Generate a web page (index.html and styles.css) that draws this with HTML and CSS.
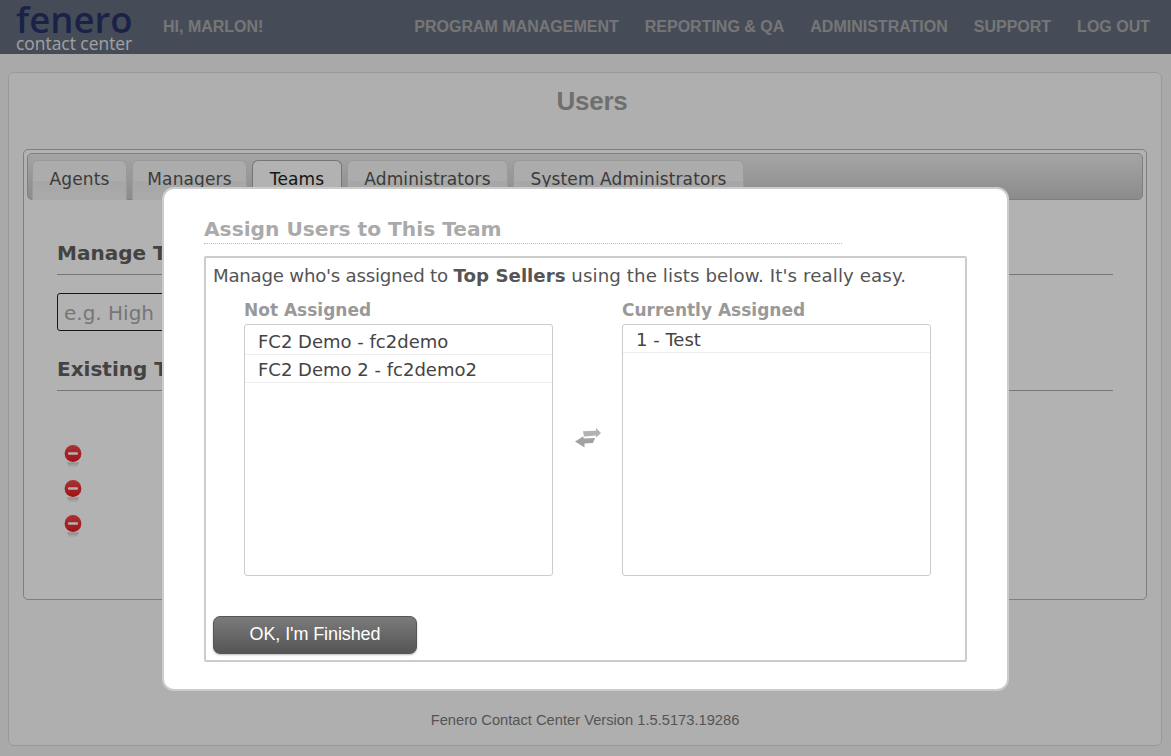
FILE: index.html
```html
<!DOCTYPE html>
<html lang="en">
<head>
<meta charset="utf-8">
<title>Users</title>
<link rel="stylesheet" href="styles.css">
</head>
<body>
<svg class="defs" width="0" height="0" aria-hidden="true">
  <defs>
    <linearGradient id="redfill" x1="0" y1="0" x2="0" y2="1"><stop offset="0" stop-color="#f04a4a"/><stop offset="1" stop-color="#e81a20"/></linearGradient>
    <linearGradient id="refl" x1="0" y1="0" x2="0" y2="1"><stop offset="0" stop-color="#c8c8c8"/><stop offset="1" stop-color="#c8c8c8" stop-opacity="0"/></linearGradient>
    <symbol id="minus-icon" viewBox="0 0 18 24">
      <path d="M3 17.5h12l-2 5h-8z" fill="url(#refl)"/>
      <circle cx="9" cy="8.5" r="8.4" fill="url(#redfill)"/>
      <rect x="4" y="7.2" width="10" height="2.6" rx="1" fill="#fff"/>
    </symbol>
  </defs>
</svg>
<header class="topbar">
  <div class="logo"><span class="logo-main">fenero</span><span class="logo-sub">contact center</span></div>
  <div class="greeting">HI, MARLON!</div>
  <nav class="nav">
    <a>PROGRAM MANAGEMENT</a><a>REPORTING &amp; QA</a><a>ADMINISTRATION</a><a>SUPPORT</a><a>LOG OUT</a>
  </nav>
</header>
<main class="panel">
  <h1 class="title">Users</h1>
  <section class="tabbox">
    <div class="tabbar">
      <div class="tab tab-agents">Agents</div>
      <div class="tab tab-managers">Managers</div>
      <div class="tab tab-teams active">Teams</div>
      <div class="tab tab-admins">Administrators</div>
      <div class="tab tab-sysadmins">System Administrators</div>
    </div>
    <div class="tabbody">
      <h2 class="section-head">Manage Teams</h2>
      <div class="fake-input">e.g. High Rollers</div>
      <h2 class="section-head existing">Existing Teams</h2>
      <ul class="team-rows">
        <li><svg class="minus"><use href="#minus-icon"/></svg></li>
        <li><svg class="minus"><use href="#minus-icon"/></svg></li>
        <li><svg class="minus"><use href="#minus-icon"/></svg></li>
      </ul>
    </div>
  </section>
  <footer class="version">Fenero Contact Center Version 1.5.5173.19286</footer>
</main>

<div class="overlay"></div>
<div class="modal">
  <h3 class="modal-title">Assign Users to This Team</h3>
  <div class="modal-box">
    <p class="intro"><span class="intro-lead">Manage who's assigned to</span> <b>Top Sellers</b> <span class="intro-tail">using the lists below. It's really easy.</span></p>
    <div class="lists">
      <div class="col">
        <div class="col-label">Not Assigned</div>
        <ul class="listbox">
          <li>FC2 Demo - fc2demo</li>
          <li>FC2 Demo 2 - fc2demo2</li>
        </ul>
      </div>
      <svg class="swap" viewBox="0 0 26 20"><path d="M8 3.2 L21 2.8 V0 L26 5 L21 9.6 V7.6 L9 8.4z" fill="#b2b2b2"/><path d="M0 13.5 L8.5 8.2 V10.6 L20 10 L18 15 L9.5 15.4 V19.5z" fill="#a2a2a2"/></svg>
      <div class="col">
        <div class="col-label">Currently Assigned</div>
        <ul class="listbox tight">
          <li>1 - Test</li>
        </ul>
      </div>
    </div>
    <button class="ok-btn" type="button">OK, I'm Finished</button>
  </div>
</div>
</body>
</html>
```
FILE: styles.css
```css
* { box-sizing: border-box; }
html, body { margin: 0; padding: 0; height: 756px; overflow: hidden; }
body { background: #f3f3f3; font-family: "DejaVu Sans", sans-serif; color: #333; }
.defs { position: absolute; }

.topbar { height: 54px; background: #646e7f; display: flex; align-items: flex-start; }
.logo { width: 146px; padding-left: 16px; display: flex; flex-direction: column; }
.logo-main { font-family: "Open Sans", sans-serif; font-size: 36.5px; line-height: 34px; height: 34px; margin-top: 2px; color: #263268; font-weight: 600; }
.logo-sub { font-family: "Open Sans", sans-serif; font-size: 17.4px; line-height: 14px; color: #e6e6e6; white-space: nowrap; }
.greeting { margin-left: 17px; margin-top: 18px; font: bold 16px/18px "Liberation Sans", sans-serif; color: #aaa; }
.nav { margin-left: auto; margin-right: 21px; margin-top: 18px; display: flex; gap: 26px; font: bold 16px/18px "Liberation Sans", sans-serif; color: #aaa; }

.panel { margin: 18px 9px 0 8px; height: 674px; background: #fbfbfb; border: 1px solid #dcdcdc; border-radius: 6px; padding: 0 14px; }
.title { margin: 14px 0 0; height: 62px; text-align: center; font: bold 26px/28px "Liberation Sans", sans-serif; color: #a0a0a0; padding-left: 14px; letter-spacing: -.3px; }

.tabbox { height: 451px; background: #fff; border: 1px solid #b6b6b6; border-radius: 5px; padding: 3px; }
.tabbar { height: 47px; border-radius: 5px; border: 1px solid #b6b6b6; background: linear-gradient(#ececec, #c8c8c8); display: flex; gap: 5px; padding: 6px 0 0 4px; }
.tab { height: 40px; padding-top: 8px; text-align: center; font-size: 17px; line-height: 20px; letter-spacing: .12px; color: #555; background: linear-gradient(#f6f6f6 50%, #eeeeee 50%, #f4f4f4); border-radius: 6px 6px 0 0; border: 1px solid #ddd; border-bottom: 0; }
.tab.active { background: #fff; color: #222; border-color: #aaa; }
.tab-agents { width: 95px; }
.tab-managers { width: 115px; }
.tab-teams { width: 90px; }
.tab-admins { width: 161px; }
.tab-sysadmins { width: 231px; }

.tabbody { padding: 0 30px; }
.section-head { margin: 0; font-size: 20px; line-height: 24px; font-weight: bold; color: #606060; padding-bottom: 9px; border-bottom: 1px solid #aaa; margin-top: 41px; }
.section-head.existing { margin-top: 26px; }
.fake-input { margin-top: 18px; width: 260px; height: 38px; border: 1px solid #222; border-radius: 3px; padding: 7px 6px; font-size: 20px; line-height: 24px; color: #aaa; background: #fff; white-space: nowrap; overflow: hidden; }
.team-rows { list-style: none; margin: 0; padding: 54px 0 0 7px; display: flex; flex-direction: column; gap: 11px; }
.team-rows li { height: 24px; }
.minus { display: block; width: 18px; height: 24px; }

.version { margin-top: 111px; text-align: center; font: 14.7px/18px "Liberation Sans", sans-serif; color: #7a7a7a; }

.overlay { position: absolute; inset: 0; background: rgba(0, 0, 0, .3); }

.modal { position: absolute; left: 162px; top: 187px; width: 847px; height: 504px; background: #fff; border: 2px solid #ccc; border-radius: 12px; padding: 27px 40px 0; }
.modal-title { margin: 0; width: 638px; height: 28px; font-size: 20.2px; line-height: 26px; font-weight: bold; color: #aaa; border-bottom: 1px dotted #bbb; }
.modal-box { margin-top: 12px; width: 763px; height: 406px; border: 2px solid #ccc; border-radius: 2px; padding: 7px 7px 0; }
.intro { margin: 0; font-size: 18.2px; line-height: 22px; color: #555; }
.intro b { color: #555; }
.intro-lead { letter-spacing: -.25px; }
.intro-tail { letter-spacing: .1px; }
.lists { display: flex; margin: 12px 0 0 31px; align-items: flex-start; }
.col { width: 309px; }
.col-label { font-size: 17px; line-height: 22px; font-weight: bold; color: #999; margin-bottom: 3px; white-space: nowrap; }
.listbox { list-style: none; margin: 0; padding: 2px 0 0; width: 309px; height: 252px; border: 1px solid #ccc; border-radius: 3px; }
.listbox li { height: 28px; padding-left: 13px; font-size: 18px; line-height: 30px; color: #444; border-bottom: 1px solid #eee; }
.listbox.tight { padding-top: 0; }
.swap { width: 26px; height: 20px; margin: 129px 21px 0 22px; flex: none; }
.ok-btn { display: block; margin-top: 40px; width: 204px; height: 38px; border: 1px solid #555; border-radius: 7px; background: linear-gradient(#7b7b7b, #555); color: #fff; font: 18px/22px "Liberation Sans", sans-serif; letter-spacing: -.1px; padding: 0 0 2px; box-shadow: 0 1px 2px #bbb; }
```
